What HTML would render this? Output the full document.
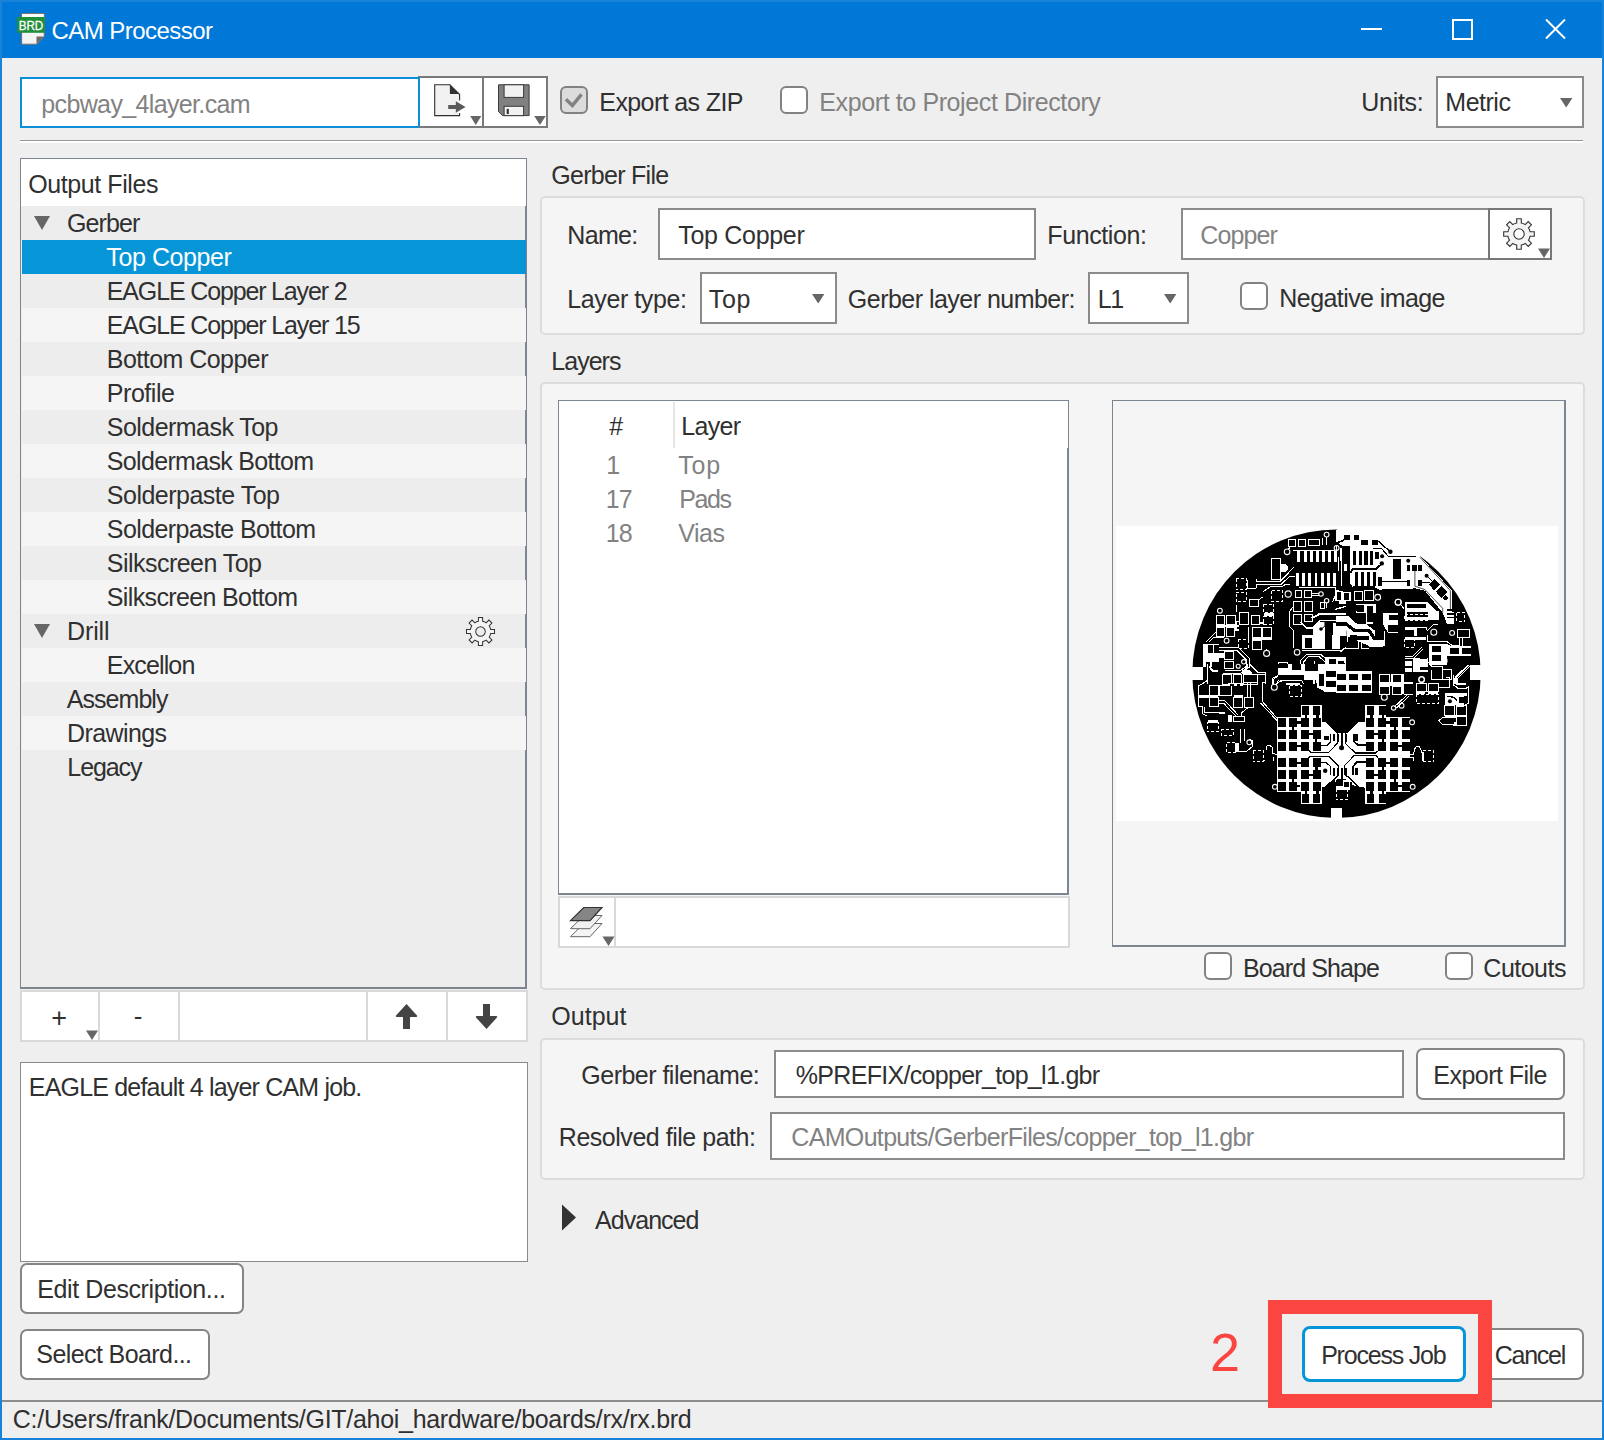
<!DOCTYPE html>
<html lang="en"><head><meta charset="utf-8"><title>CAM Processor</title>
<style>
html,body{margin:0;padding:0;background:#efefef;}
body{width:1604px;height:1440px;overflow:hidden;font-family:"Liberation Sans",sans-serif;}
#win{position:relative;width:1604px;height:1440px;background:#efefef;overflow:hidden;}
#win div,#win svg{position:absolute;box-sizing:border-box;}
.t{white-space:pre;font-family:"Liberation Sans",sans-serif;}
#titlebar{left:0;top:0;width:1604px;height:58px;background:#0078d7;border-top:2px solid #1883d8;}
#bl{left:0;top:0;width:2px;height:1440px;background:#1883d8;}
#br{left:1602px;top:0;width:2px;height:1440px;background:#1883d8;}
#bb{left:0;top:1438px;width:1604px;height:2px;background:#1883d8;}
.inp{background:#fff;border:2px solid #8b8b8b;}
.btn{background:#fff;border:2px solid #858585;border-radius:7px;}
.cb{width:28px;height:28px;background:#fff;border:2px solid #828282;border-radius:6px;}
.grp{background:#f5f5f5;border:2px solid #dcdcdc;border-radius:5px;}
.sunk{border-style:solid;border-color:#7d8590;border-width:1px 2px 2px 1px;}
.tb{background:#fff;border:2px solid #d9d9d9;}
.vd{width:2px;background:#d9d9d9;}
.row{left:3px;width:503px;height:34px;}
.ra{background:#ededed;}
.rb{background:#f5f5f5;width:504px !important;}

</style></head>
<body>
<div id="win">
<div id="titlebar"></div>
<div id="bl"></div><div id="br"></div><div id="bb"></div>
<!-- title icon -->
<svg style="left:17px;top:13px" width="30" height="33" viewBox="0 0 30 33">
  <path d="M4.600 0.600h22.600v23l-7.500 7.600h-15.100z" fill="#f4f4f4" stroke="#7a6c64" stroke-width="1"/>
  <rect x="5.100" y="1.100" width="21.600" height="3" fill="#fff"/>
  <path d="M27.200 23.400h-7.700v7.700z" fill="#6b6b6b"/>
  <rect x="0" y="4" width="27.700" height="15.800" fill="#1f8f3a"/>
  <text x="14" y="16.900" font-family="Liberation Sans, sans-serif" font-size="13.600" fill="#fff" text-anchor="middle" textLength="24.600" stroke="#fff" stroke-width="0.3" lengthAdjust="spacingAndGlyphs">BRD</text>
</svg>
<!-- window controls -->
<svg style="left:1350px;top:10px" width="230" height="40" viewBox="0 0 230 40">
  <rect x="11" y="18" width="21" height="2" fill="#fff"/>
  <rect x="103" y="10" width="19" height="19" fill="none" stroke="#fff" stroke-width="2"/>
  <path d="M196 9.5l19 19M215 9.5l-19 19" stroke="#fff" stroke-width="2" fill="none"/>
</svg>

<!-- top row -->
<div style="left:20px;top:77px;width:400px;height:51px;background:#fff;border:2px solid #0a8fd8;"></div>
<div class="inp" style="left:418px;top:76px;width:66px;height:52px;border-color:#7a7a7a;border-left-color:#0a8fd8"></div>
<div class="inp" style="left:482px;top:76px;width:66px;height:52px;border-color:#7a7a7a"></div>
<!-- export doc icon -->
<svg style="left:430px;top:80px" width="56" height="50" viewBox="0 0 56 50">
  <path d="M4.700 4.800h15.200l9.700 9.700v21.100h-24.900z" fill="#f2f2f2" stroke="#2e2e2e" stroke-width="1.100"/>
  <path d="M19.900 4.800v9.300h9.700z" fill="#333"/>
  <rect x="28" y="20.500" width="3" height="12.500" fill="#fff"/>
  <path d="M18.200 25h7.600v-3.800l9.800 5.750-9.800 5.750v-3.800h-7.600z" fill="#5a5a5a"/>
  <path d="M40.200 36.100h11.100l-5.550 8.900z" fill="#666"/>
</svg>
<!-- save icon -->
<svg style="left:494px;top:80px" width="56" height="50" viewBox="0 0 56 50">
  <path d="M4.500 4.800h30.600v30.800h-26.600l-4-4z" fill="#808080" stroke="#3a3a3a" stroke-width="1"/>
  <rect x="10.100" y="4.800" width="19.500" height="12.600" fill="#f2f2f2" stroke="#3a3a3a" stroke-width="1"/>
  <rect x="10.100" y="26.300" width="19.500" height="9.300" fill="#f2f2f2" stroke="#3a3a3a" stroke-width="1"/>
  <rect x="12.700" y="28.900" width="2.100" height="5.100" fill="#2e2e2e"/>
  <path d="M40.200 36.100h11.500l-5.750 8.900z" fill="#666"/>
</svg>
<div class="cb" style="left:560px;top:86px;background:#dcdcdc;border-color:#828282"></div>
<svg style="left:560px;top:86px" width="28" height="28" viewBox="0 0 28 28"><path d="M5.900 13.300l6.500 6.200 9.100-11.200" fill="none" stroke="#828282" stroke-width="3.500"/></svg>
<div class="cb" style="left:780.300px;top:86px"></div>
<div class="inp" style="left:1436px;top:76px;width:148px;height:52px"></div>
<svg style="left:1558px;top:96px" width="18" height="14" viewBox="0 0 18 14"><path d="M2 2h12.400l-6.200 9.600z" fill="#666"/></svg>
<div style="left:20px;top:140px;width:1563px;height:1px;background:#979797"></div>
<div style="left:20px;top:141px;width:1563px;height:2px;background:#fff"></div>

<!-- tree -->
<div class="sunk" style="left:20px;top:158px;width:507px;height:830.500px;background:#ededed;">
  <div style="left:0;top:0;width:505px;height:47px;background:#fff"></div>
</div>
<div id="rows" style="left:19px;top:206px;width:506px;height:580px;">
  <div class="row ra" style="top:0"></div>
  <div class="row" style="top:34px;width:504px;background:#0696d7"></div>
  <div class="row ra" style="top:68px"></div>
  <div class="row rb" style="top:102px"></div>
  <div class="row ra" style="top:136px"></div>
  <div class="row rb" style="top:170px"></div>
  <div class="row ra" style="top:204px"></div>
  <div class="row rb" style="top:238px"></div>
  <div class="row ra" style="top:272px"></div>
  <div class="row rb" style="top:306px"></div>
  <div class="row ra" style="top:340px"></div>
  <div class="row rb" style="top:374px"></div>
  <div class="row ra" style="top:408px"></div>
  <div class="row rb" style="top:442px"></div>
  <div class="row ra" style="top:476px"></div>
  <div class="row rb" style="top:510px"></div>
  <div class="row ra" style="top:544px"></div>
</div>
<svg style="left:32px;top:214px" width="20" height="18" viewBox="0 0 20 18"><path d="M2 2h16l-8 14z" fill="#666"/></svg>
<svg style="left:32px;top:622px" width="20" height="18" viewBox="0 0 20 18"><path d="M2 2h16l-8 14z" fill="#666"/></svg>
<svg class="gear" style="left:463.560px;top:614.500px" width="33" height="33" viewBox="-18 -18 36 36"><path fill="#f4f4f4" fill-rule="evenodd" stroke="#333" stroke-width="1.1" stroke-linejoin="miter" d="M-2.30 -11.06L-2.30 -15.30L2.30 -15.30L2.30 -11.06A11.3 11.3 0 0 1 6.20 -9.45L9.19 -12.45L12.45 -9.19L9.45 -6.20A11.3 11.3 0 0 1 11.06 -2.30L15.30 -2.30L15.30 2.30L11.06 2.30A11.3 11.3 0 0 1 9.45 6.20L12.45 9.19L9.19 12.45L6.20 9.45A11.3 11.3 0 0 1 2.30 11.06L2.30 15.30L-2.30 15.30L-2.30 11.06A11.3 11.3 0 0 1 -6.20 9.45L-9.19 12.45L-12.45 9.19L-9.45 6.20A11.3 11.3 0 0 1 -11.06 2.30L-15.30 2.30L-15.30 -2.30L-11.06 -2.30A11.3 11.3 0 0 1 -9.45 -6.20L-12.45 -9.19L-9.19 -12.45L-6.20 -9.45A11.3 11.3 0 0 1 -2.30 -11.06ZM5.20 0A5.20 5.20 0 1 0 -5.20 0A5.20 5.20 0 1 0 5.20 0Z"/></svg>

<!-- tree toolbar -->
<div class="tb" style="left:20px;top:990px;width:508px;height:51.500px"></div>
<div class="vd" style="left:98px;top:990px;height:51.500px"></div>
<div class="vd" style="left:178px;top:990px;height:51.500px"></div>
<div class="vd" style="left:366px;top:990px;height:51.500px"></div>
<div class="vd" style="left:446px;top:990px;height:51.500px"></div>
<svg style="left:84px;top:1028px" width="16" height="13" viewBox="0 0 16 13"><path d="M2 2.500h12l-6 9.500z" fill="#666"/></svg>
<svg style="left:390px;top:1000px" width="120" height="34" viewBox="0 0 120 34">
  <path d="M16.500 4l-10.500 11.500q-0.800 1.500 1 1.500h6v12h7v-12h6q1.800 0 1-1.500z" fill="#444"/>
  <path d="M96.500 29l-10.500-11.500q-0.800-1.500 1-1.500h6v-12h7v12h6q1.800 0 1 1.500z" fill="#444"/>
</svg>

<!-- description -->
<div style="left:20px;top:1062px;width:508px;height:200px;background:#fff;border:1px solid #8a8a8a"></div>
<div class="btn" style="left:20px;top:1262.500px;width:224px;height:51.500px"></div>
<div class="btn" style="left:20px;top:1328.500px;width:190px;height:51.500px"></div>

<!-- status bar line -->
<div style="left:2px;top:1400px;width:1600px;height:2px;background:#8c8c8c"></div>

<!-- Gerber File group -->
<div class="grp" style="left:540px;top:196px;width:1045px;height:139px"></div>
<div class="inp" style="left:658px;top:208px;width:378px;height:52px"></div>
<div class="inp" style="left:1181px;top:208px;width:310px;height:52px"></div>
<div class="inp" style="left:1488px;top:208px;width:64px;height:52px;border-color:#777"></div>
<svg class="gear" style="left:1501.400px;top:215.500px" width="36" height="36" viewBox="-18 -18 36 36"><path fill="#f4f4f4" fill-rule="evenodd" stroke="#333" stroke-width="1.1" stroke-linejoin="miter" d="M-2.30 -11.06L-2.30 -15.30L2.30 -15.30L2.30 -11.06A11.3 11.3 0 0 1 6.20 -9.45L9.19 -12.45L12.45 -9.19L9.45 -6.20A11.3 11.3 0 0 1 11.06 -2.30L15.30 -2.30L15.30 2.30L11.06 2.30A11.3 11.3 0 0 1 9.45 6.20L12.45 9.19L9.19 12.45L6.20 9.45A11.3 11.3 0 0 1 2.30 11.06L2.30 15.30L-2.30 15.30L-2.30 11.06A11.3 11.3 0 0 1 -6.20 9.45L-9.19 12.45L-12.45 9.19L-9.45 6.20A11.3 11.3 0 0 1 -11.06 2.30L-15.30 2.30L-15.30 -2.30L-11.06 -2.30A11.3 11.3 0 0 1 -9.45 -6.20L-12.45 -9.19L-9.19 -12.45L-6.20 -9.45A11.3 11.3 0 0 1 -2.30 -11.06ZM5.20 0A5.20 5.20 0 1 0 -5.20 0A5.20 5.20 0 1 0 5.20 0Z"/></svg>
<svg style="left:1536px;top:246px" width="16" height="13" viewBox="0 0 16 13"><path d="M2 2.500h12l-6 9.500z" fill="#666"/></svg>
<div class="inp" style="left:700px;top:272px;width:136.500px;height:52px"></div>
<svg style="left:810px;top:292px" width="18" height="14" viewBox="0 0 18 14"><path d="M2 2h12.400l-6.200 9.600z" fill="#666"/></svg>
<div class="inp" style="left:1088px;top:272px;width:101px;height:52px"></div>
<svg style="left:1162px;top:292px" width="18" height="14" viewBox="0 0 18 14"><path d="M2 2h12.400l-6.200 9.600z" fill="#666"/></svg>
<div class="cb" style="left:1240.300px;top:282.300px"></div>

<!-- Layers group -->
<div class="grp" style="left:540px;top:382px;width:1045px;height:608px"></div>
<div class="sunk" style="left:558px;top:400px;width:511px;height:495px;background:#fff"></div>
<div style="left:1067px;top:401px;width:1px;height:47px;background:#fff"></div>
<div style="left:673px;top:402px;width:2px;height:46px;background:#e6e6e6"></div>
<div class="tb" style="left:558px;top:896px;width:511.500px;height:52px"></div>
<div class="vd" style="left:614px;top:896px;height:52px"></div>
<svg style="left:566px;top:903px" width="52" height="46" viewBox="0 0 52 46">
  <path d="M4.500 33.700l13.200-13.200h18.300l-12 13.200z" fill="#f4f4f4" stroke="#666" stroke-width="1"/>
  <path d="M4.500 25.700l13.200-13.200h18.300l-12 13.200z" fill="#f0f0f0" stroke="#666" stroke-width="1"/>
  <path d="M4.500 17.700l13.200-13.200h18.300l-12 13.200z" fill="#858585" stroke="#333" stroke-width="1.200"/>
  <path d="M36.500 33.500h12l-6 9.500z" fill="#666"/>
</svg>
<div class="sunk" style="left:1112px;top:400px;width:453.500px;height:547px;background:#f5f5f5;border-width:1px 2px 2px 1px"></div>
<div style="left:1116px;top:526px;width:442px;height:295px;background:#fff"></div>
<svg style="left:1116px;top:526px" width="442" height="295" viewBox="1116 526 442 295" shape-rendering="crispEdges"><defs><clipPath id="pc"><circle cx="1336.5" cy="673.7" r="145.2"/></clipPath></defs><circle cx="1336.5" cy="673.7" r="144.2" fill="#000" shape-rendering="geometricPrecision"/><g clip-path="url(#pc)"><polyline points="1292.7,550.7 1335.4,550.7" fill="none" stroke="#fff" stroke-width="1.0" stroke-linejoin="round"/><rect x="1297.4" y="551.2" width="3.0" height="11.1" fill="#fff"/><rect x="1303.6" y="551.2" width="3.0" height="11.1" fill="#fff"/><rect x="1309.7" y="551.2" width="3.0" height="11.1" fill="#fff"/><rect x="1315.8" y="551.2" width="3.0" height="11.1" fill="#fff"/><rect x="1321.9" y="551.2" width="3.0" height="11.1" fill="#fff"/><rect x="1328.0" y="551.2" width="3.0" height="11.1" fill="#fff"/><rect x="1334.1" y="551.2" width="3.0" height="11.1" fill="#fff"/><rect x="1296.2" y="573.4" width="2.8" height="12.4" fill="#fff"/><rect x="1302.3" y="573.4" width="2.8" height="12.4" fill="#fff"/><rect x="1308.4" y="573.4" width="2.8" height="12.4" fill="#fff"/><rect x="1314.6" y="573.4" width="2.8" height="12.4" fill="#fff"/><rect x="1320.7" y="573.4" width="2.8" height="12.4" fill="#fff"/><rect x="1326.8" y="573.4" width="2.8" height="12.4" fill="#fff"/><rect x="1332.9" y="573.4" width="2.8" height="12.4" fill="#fff"/><polyline points="1299.3,587.1 1334.9,587.1" fill="none" stroke="#fff" stroke-width="1.0" stroke-linejoin="round"/><rect x="1271.6" y="558.4" width="8.9" height="21.1" fill="none" stroke="#fff" stroke-width="1.0"/><rect x="1280.7" y="564.0" width="5.0" height="7.8" fill="#fff"/><polygon points="1285.7,564.0 1288.8,567.9 1285.7,571.8" fill="#fff"/><polyline points="1256.0,579.0 1256.0,581.8 1279.9,581.8 1294.3,566.8" fill="none" stroke="#fff" stroke-width="1.0" stroke-linejoin="round"/><polyline points="1247.7,588.4 1256.0,588.4 1256.0,584.9 1280.4,584.9 1289.9,576.2 1295.4,576.2" fill="none" stroke="#fff" stroke-width="1.0" stroke-linejoin="round"/><polyline points="1262.7,591.8 1270.4,586.8 1281.6,586.8 1286.0,584.0 1290.4,584.0" fill="none" stroke="#fff" stroke-width="1.0" stroke-linejoin="round"/><rect x="1236.0" y="578.4" width="10.6" height="11.1" fill="none" stroke="#fff" stroke-width="1.0" stroke-dasharray="3 2"/><rect x="1236.0" y="592.9" width="10.6" height="8.9" fill="none" stroke="#fff" stroke-width="1.0" stroke-dasharray="3 2"/><rect x="1246.6" y="579.6" width="1.7" height="8.9" fill="#fff"/><circle cx="1287.1" cy="551.8" r="2.8" fill="none" stroke="#fff" stroke-width="1.1" shape-rendering="geometricPrecision"/><polyline points="1288.8,549.0 1289.9,546.8 1296.0,546.8" fill="none" stroke="#fff" stroke-width="1.0" stroke-linejoin="round"/><rect x="1288.2" y="539.6" width="7.2" height="6.7" fill="none" stroke="#fff" stroke-width="1.0"/><rect x="1298.2" y="539.6" width="7.2" height="6.7" fill="none" stroke="#fff" stroke-width="1.0"/><rect x="1308.2" y="539.6" width="11.1" height="5.6" fill="none" stroke="#fff" stroke-width="1.0"/><circle cx="1326.6" cy="534.6" r="2.4" fill="none" stroke="#fff" stroke-width="1.1" shape-rendering="geometricPrecision"/><polyline points="1326.6,537.0 1326.6,545.1" fill="none" stroke="#fff" stroke-width="1.0" stroke-linejoin="round"/><polyline points="1322.7,545.1 1322.7,538.4" fill="none" stroke="#fff" stroke-width="1.0" stroke-linejoin="round"/><circle cx="1336.6" cy="547.9" r="2.4" fill="none" stroke="#fff" stroke-width="1.1" shape-rendering="geometricPrecision"/><rect x="1216.0" y="615.1" width="8.3" height="9.4" fill="none" stroke="#fff" stroke-width="1.0"/><rect x="1226.6" y="615.1" width="8.9" height="9.4" fill="none" stroke="#fff" stroke-width="1.0"/><rect x="1239.3" y="612.9" width="8.9" height="11.1" fill="none" stroke="#fff" stroke-width="1.0"/><rect x="1251.0" y="615.1" width="8.3" height="8.9" fill="none" stroke="#fff" stroke-width="1.0"/><rect x="1216.0" y="624.6" width="19.4" height="2.8" fill="#fff"/><rect x="1216.0" y="627.3" width="8.3" height="8.9" fill="none" stroke="#fff" stroke-width="1.0"/><rect x="1226.6" y="627.3" width="8.3" height="8.9" fill="none" stroke="#fff" stroke-width="1.0"/><circle cx="1219.9" cy="610.7" r="2.4" fill="none" stroke="#fff" stroke-width="1.1" shape-rendering="geometricPrecision"/><circle cx="1226.6" cy="640.7" r="2.4" fill="none" stroke="#fff" stroke-width="1.1" shape-rendering="geometricPrecision"/><rect x="1235.4" y="620.7" width="3.9" height="10.0" fill="#fff"/><rect x="1236.6" y="622.3" width="2.0" height="2.4" fill="#000"/><rect x="1236.6" y="626.8" width="2.0" height="2.4" fill="#000"/><rect x="1252.1" y="627.3" width="9.4" height="10.0" fill="none" stroke="#fff" stroke-width="1.0"/><rect x="1262.7" y="627.3" width="8.9" height="10.0" fill="none" stroke="#fff" stroke-width="1.0"/><rect x="1251.6" y="637.3" width="20.0" height="2.8" fill="#fff"/><rect x="1252.1" y="640.1" width="9.4" height="8.9" fill="none" stroke="#fff" stroke-width="1.0"/><rect x="1238.2" y="639.6" width="10.0" height="8.9" fill="none" stroke="#fff" stroke-width="1.0" stroke-dasharray="3 2"/><rect x="1263.8" y="604.0" width="10.0" height="8.9" fill="none" stroke="#fff" stroke-width="1.0" stroke-dasharray="3 2"/><rect x="1263.8" y="616.2" width="10.0" height="7.8" fill="none" stroke="#fff" stroke-width="1.0" stroke-dasharray="3 2"/><rect x="1259.3" y="621.8" width="4.4" height="2.2" fill="#fff"/><rect x="1263.8" y="612.9" width="10.0" height="3.3" fill="#fff"/><circle cx="1266.6" cy="653.4" r="3.0" fill="none" stroke="#fff" stroke-width="1.1" shape-rendering="geometricPrecision"/><polyline points="1266.6,650.4 1266.6,649.0" fill="none" stroke="#fff" stroke-width="1.0" stroke-linejoin="round"/><polyline points="1236.6,605.1 1236.6,611.8" fill="none" stroke="#fff" stroke-width="1.0" stroke-linejoin="round"/><polyline points="1248.2,627.3 1248.2,639.6" fill="none" stroke="#fff" stroke-width="1.0" stroke-linejoin="round"/><rect x="1202.7" y="644.0" width="16.7" height="23.3" fill="#fff"/><rect x="1207.7" y="644.6" width="5.0" height="8.0" fill="#000"/><rect x="1214.3" y="644.6" width="4.7" height="8.0" fill="#000"/><rect x="1206.0" y="661.6" width="4.4" height="5.8" fill="#000"/><rect x="1212.1" y="661.6" width="6.9" height="5.8" fill="#000"/><rect x="1219.3" y="653.4" width="5.6" height="5.0" fill="#fff"/><polyline points="1206.0,641.8 1216.0,631.8 1216.0,627.3" fill="none" stroke="#fff" stroke-width="1.0" stroke-linejoin="round"/><polyline points="1209.3,641.8 1213.8,637.3 1224.3,637.3" fill="none" stroke="#fff" stroke-width="1.0" stroke-linejoin="round"/><polyline points="1219.3,647.3 1238.2,647.3 1249.3,658.4 1249.3,667.3 1240.4,673.4 1222.7,673.4" fill="none" stroke="#fff" stroke-width="1.0" stroke-linejoin="round"/><polyline points="1219.3,650.1 1236.6,650.1 1246.6,660.1 1246.6,666.2 1239.9,670.7 1224.9,670.7" fill="none" stroke="#fff" stroke-width="1.0" stroke-linejoin="round"/><rect x="1224.9" y="651.8" width="8.9" height="7.2" fill="none" stroke="#fff" stroke-width="1.0"/><rect x="1224.9" y="661.8" width="8.9" height="6.7" fill="none" stroke="#fff" stroke-width="1.0"/><circle cx="1243.8" cy="661.8" r="2.2" fill="none" stroke="#fff" stroke-width="1.1" shape-rendering="geometricPrecision"/><circle cx="1238.2" cy="666.2" r="2.0" fill="none" stroke="#fff" stroke-width="1.1" shape-rendering="geometricPrecision"/><polyline points="1209.3,667.3 1212.7,671.8 1218.2,671.8" fill="none" stroke="#fff" stroke-width="1.0" stroke-linejoin="round"/><rect x="1293.2" y="601.8" width="8.3" height="10.0" fill="none" stroke="#fff" stroke-width="1.0"/><rect x="1304.9" y="601.8" width="7.8" height="10.0" fill="none" stroke="#fff" stroke-width="1.0"/><rect x="1293.2" y="614.0" width="8.3" height="10.0" fill="none" stroke="#fff" stroke-width="1.0"/><rect x="1304.9" y="614.0" width="7.8" height="7.8" fill="none" stroke="#fff" stroke-width="1.0"/><polyline points="1292.7,607.3 1289.3,611.8 1289.3,626.2 1293.8,630.7 1293.8,648.4" fill="none" stroke="#fff" stroke-width="1.0" stroke-linejoin="round"/><polygon points="1301.6,635.1 1301.6,649.0 1346.0,649.0 1346.0,622.9 1332.7,622.9 1332.7,635.1" fill="#fff"/><polygon points="1312.7,635.1 1312.7,628.4 1319.3,621.8 1324.9,621.8 1324.9,635.1" fill="#fff"/><rect x="1305.4" y="638.4" width="6.1" height="10.0" fill="#000"/><rect x="1324.9" y="627.9" width="6.9" height="21.1" fill="#000"/><rect x="1339.9" y="624.0" width="6.1" height="25.0" fill="#000"/><polyline points="1311.6,618.4 1319.3,614.2 1346.0,614.2" fill="none" stroke="#fff" stroke-width="2.0" stroke-linejoin="round"/><polyline points="1300.4,621.8 1306.6,627.9 1312.7,627.9 1319.9,620.4 1346.0,620.4" fill="none" stroke="#fff" stroke-width="1.3" stroke-linejoin="round"/><circle cx="1321.0" cy="629.0" r="1.8" fill="#000" shape-rendering="geometricPrecision"/><polyline points="1321.0,629.0 1324.9,626.2 1324.9,621.8" fill="none" stroke="#000" stroke-width="0.9" stroke-linejoin="round"/><circle cx="1297.1" cy="652.3" r="2.8" fill="none" stroke="#fff" stroke-width="1.1" shape-rendering="geometricPrecision"/><polyline points="1301.6,650.4 1341.6,650.4 1346.0,647.3" fill="none" stroke="#fff" stroke-width="1.0" stroke-linejoin="round"/><rect x="1304.9" y="590.7" width="6.7" height="6.7" fill="none" stroke="#fff" stroke-width="1.0"/><polyline points="1311.6,593.4 1318.8,593.4" fill="none" stroke="#fff" stroke-width="1.0" stroke-linejoin="round"/><polyline points="1311.6,595.1 1318.8,595.1" fill="none" stroke="#fff" stroke-width="1.0" stroke-linejoin="round"/><circle cx="1321.0" cy="594.0" r="2.2" fill="none" stroke="#fff" stroke-width="1.1" shape-rendering="geometricPrecision"/><rect x="1295.4" y="590.7" width="5.6" height="6.7" fill="none" stroke="#fff" stroke-width="1.0"/><circle cx="1288.2" cy="594.0" r="3.1" fill="none" stroke="#fff" stroke-width="1.1" shape-rendering="geometricPrecision"/><rect x="1271.6" y="590.7" width="11.1" height="10.6" fill="none" stroke="#fff" stroke-width="1.0" stroke-dasharray="3 2"/><circle cx="1326.6" cy="600.7" r="2.2" fill="none" stroke="#fff" stroke-width="1.1" shape-rendering="geometricPrecision"/><polyline points="1326.6,602.9 1326.6,608.4" fill="none" stroke="#fff" stroke-width="1.0" stroke-linejoin="round"/><rect x="1320.4" y="602.3" width="4.4" height="6.1" fill="none" stroke="#fff" stroke-width="1.0"/><rect x="1249.3" y="599.6" width="8.9" height="6.7" fill="none" stroke="#fff" stroke-width="1.0"/><polyline points="1258.2,600.7 1262.7,596.8" fill="none" stroke="#fff" stroke-width="1.0" stroke-linejoin="round"/><polyline points="1335.4,587.3 1335.4,595.1 1332.7,601.8" fill="none" stroke="#fff" stroke-width="1.0" stroke-linejoin="round"/><polyline points="1341.6,550.7 1341.6,586.2" fill="none" stroke="#fff" stroke-width="1.0" stroke-linejoin="round"/><polyline points="1338.2,557.3 1338.2,570.7" fill="none" stroke="#fff" stroke-width="1.0" stroke-linejoin="round"/><rect x="1334.9" y="589.6" width="4.4" height="11.1" fill="#fff"/><rect x="1339.3" y="600.7" width="6.7" height="3.3" fill="#fff"/><polyline points="1334.9,609.6 1346.0,606.2" fill="none" stroke="#fff" stroke-width="1.3" stroke-linejoin="round"/><rect x="1278.2" y="662.3" width="9.4" height="8.3" fill="none" stroke="#fff" stroke-width="1.0"/><rect x="1278.2" y="671.8" width="21.1" height="3.1" fill="#fff"/><rect x="1287.7" y="664.0" width="2.8" height="7.8" fill="#fff"/><polyline points="1303.8,668.4 1303.8,661.8 1308.2,656.8 1319.3,656.8 1324.9,661.8 1329.3,661.8" fill="none" stroke="#fff" stroke-width="1.0" stroke-linejoin="round"/><polyline points="1300.4,668.4 1300.4,660.7 1307.1,654.0 1320.4,654.0 1326.0,659.0" fill="none" stroke="#fff" stroke-width="1.0" stroke-linejoin="round"/><polygon points="1324.9,657.3 1346.0,657.3 1346.0,684.0 1312.7,684.0 1312.7,677.3 1324.9,677.3" fill="#fff"/><rect x="1329.3" y="659.0" width="6.9" height="6.9" fill="#000"/><rect x="1338.2" y="659.0" width="6.9" height="6.9" fill="#000"/><rect x="1329.3" y="668.4" width="6.9" height="6.9" fill="#000"/><rect x="1338.2" y="668.4" width="6.9" height="6.9" fill="#000"/><rect x="1314.9" y="679.0" width="6.9" height="6.9" fill="#000"/><rect x="1324.9" y="679.0" width="6.9" height="6.9" fill="#000"/><rect x="1334.9" y="679.0" width="6.9" height="6.9" fill="#000"/><rect x="1313.8" y="660.7" width="5.6" height="8.9" fill="#000"/><rect x="1313.8" y="660.7" width="1.3" height="8.9" fill="#fff"/><polyline points="1273.8,684.0 1273.8,679.0 1278.2,676.2" fill="none" stroke="#fff" stroke-width="1.0" stroke-linejoin="round"/><polyline points="1277.1,684.0 1280.4,680.7 1301.6,680.7 1303.8,684.0" fill="none" stroke="#fff" stroke-width="1.0" stroke-linejoin="round"/><rect x="1222.7" y="674.0" width="8.9" height="10.0" fill="none" stroke="#fff" stroke-width="1.0"/><rect x="1233.8" y="674.0" width="7.8" height="10.0" fill="none" stroke="#fff" stroke-width="1.0"/><rect x="1243.8" y="674.0" width="13.3" height="10.0" fill="none" stroke="#fff" stroke-width="1.0"/><polyline points="1249.3,664.0 1258.2,672.9 1265.4,672.9 1265.4,684.0" fill="none" stroke="#fff" stroke-width="1.0" stroke-linejoin="round"/><polyline points="1207.1,668.4 1207.1,684.0" fill="none" stroke="#fff" stroke-width="1.0" stroke-linejoin="round"/><polygon points="1342.7,524.0 1420.4,524.0 1420.4,556.8 1452.1,590.7 1452.1,611.8 1454.3,611.8 1454.3,624.0 1447.1,624.0 1442.7,612.9 1424.9,590.7 1416.0,588.4 1379.3,589.6 1373.8,586.8 1352.7,586.8 1350.4,584.0 1350.4,546.2 1342.7,546.2 1336.0,541.8 1336.0,530.7" fill="#fff"/><rect x="1344.3" y="535.1" width="5.6" height="4.4" fill="#000"/><rect x="1354.3" y="535.1" width="4.7" height="4.4" fill="#000"/><rect x="1361.0" y="539.6" width="7.2" height="5.0" fill="#000"/><rect x="1371.6" y="539.6" width="6.1" height="5.0" fill="#000"/><polyline points="1377.7,540.7 1390.4,551.8" fill="none" stroke="#000" stroke-width="1.3" stroke-linejoin="round"/><circle cx="1390.4" cy="551.8" r="2.2" fill="#000" shape-rendering="geometricPrecision"/><polyline points="1336.0,542.9 1342.7,540.7 1346.0,538.4" fill="none" stroke="#000" stroke-width="1.6" stroke-linejoin="round"/><rect x="1347.1" y="546.8" width="3.3" height="13.9" fill="#000"/><rect x="1352.7" y="550.7" width="3.3" height="13.9" fill="#000"/><rect x="1358.8" y="550.7" width="3.3" height="13.9" fill="#000"/><rect x="1364.3" y="550.7" width="3.3" height="13.9" fill="#000"/><rect x="1369.9" y="550.7" width="3.3" height="13.9" fill="#000"/><polyline points="1350.4,572.9 1352.7,569.0 1376.0,569.0 1382.1,563.4" fill="none" stroke="#000" stroke-width="1.8" stroke-linejoin="round"/><circle cx="1381.8" cy="563.4" r="2.2" fill="#000" shape-rendering="geometricPrecision"/><rect x="1375.4" y="551.8" width="3.9" height="6.7" fill="#000"/><circle cx="1382.1" cy="556.2" r="2.0" fill="#000" shape-rendering="geometricPrecision"/><polyline points="1372.7,548.4 1381.6,548.4 1388.2,556.2 1416.0,556.2" fill="none" stroke="#000" stroke-width="1.1" stroke-linejoin="round"/><rect x="1354.9" y="572.3" width="3.1" height="13.3" fill="#000"/><rect x="1361.0" y="572.3" width="3.1" height="13.3" fill="#000"/><rect x="1367.1" y="572.3" width="3.1" height="13.3" fill="#000"/><rect x="1373.2" y="572.3" width="3.1" height="13.3" fill="#000"/><rect x="1352.7" y="586.2" width="22.2" height="1.7" fill="#000"/><rect x="1393.2" y="559.0" width="7.8" height="20.0" fill="#000"/><rect x="1378.2" y="577.3" width="3.3" height="8.3" fill="#000"/><rect x="1407.1" y="579.6" width="3.3" height="6.7" fill="#000"/><polyline points="1381.6,581.8 1407.1,581.8" fill="none" stroke="#000" stroke-width="1.3" stroke-linejoin="round"/><rect x="1407.1" y="565.1" width="3.3" height="5.6" fill="#000"/><rect x="1412.1" y="565.1" width="4.4" height="5.6" fill="#000"/><rect x="1418.2" y="565.1" width="3.3" height="5.6" fill="#000"/><circle cx="1408.2" cy="560.7" r="2.0" fill="#000" shape-rendering="geometricPrecision"/><polyline points="1414.9,570.7 1414.9,586.2 1424.9,589.6 1442.7,608.4 1442.7,612.9" fill="none" stroke="#000" stroke-width="0.7" stroke-linejoin="round"/><polyline points="1419.9,557.3 1450.4,590.7 1450.4,609.6" fill="none" stroke="#000" stroke-width="0.7" stroke-linejoin="round"/><rect x="1418.2" y="580.1" width="3.9" height="5.6" fill="#000"/><circle cx="1426.6" cy="575.7" r="2.0" fill="#000" shape-rendering="geometricPrecision"/><polyline points="1422.1,582.3 1430.4,582.3" fill="none" stroke="#000" stroke-width="1.1" stroke-linejoin="round"/><polyline points="1426.6,575.7 1432.7,581.8" fill="none" stroke="#000" stroke-width="1.1" stroke-linejoin="round"/><polygon points="1429.3,584.6 1434.9,579.0 1440.4,584.6 1434.3,590.7" fill="#000"/><polygon points="1436.0,591.8 1441.6,586.2 1447.1,591.8 1441.6,598.4" fill="#000"/><polygon points="1442.7,597.3 1446.0,595.1 1448.2,598.4 1444.9,600.7" fill="#000"/><rect x="1447.1" y="609.0" width="6.9" height="2.4" fill="#000"/><rect x="1447.1" y="613.4" width="6.9" height="1.3" fill="#000"/><rect x="1447.1" y="616.8" width="6.9" height="1.3" fill="#000"/><rect x="1456.6" y="612.9" width="8.3" height="8.3" fill="none" stroke="#fff" stroke-width="1.0" stroke-dasharray="3 2"/><rect x="1336.0" y="546.2" width="1.3" height="14.4" fill="#fff"/><rect x="1340.4" y="547.9" width="1.6" height="13.3" fill="#fff"/><rect x="1344.3" y="564.0" width="2.2" height="6.7" fill="#fff"/><rect x="1336.0" y="590.7" width="6.7" height="10.0" fill="#fff"/><rect x="1336.9" y="591.8" width="4.4" height="7.8" fill="#000"/><rect x="1342.7" y="591.8" width="7.8" height="8.9" fill="#fff"/><rect x="1343.8" y="592.9" width="5.6" height="6.7" fill="#000"/><rect x="1354.3" y="591.8" width="8.3" height="8.9" fill="none" stroke="#fff" stroke-width="1.0"/><rect x="1364.9" y="590.7" width="8.3" height="10.0" fill="none" stroke="#fff" stroke-width="1.0"/><circle cx="1377.7" cy="597.3" r="2.9" fill="none" stroke="#fff" stroke-width="1.1" shape-rendering="geometricPrecision"/><circle cx="1398.2" cy="602.3" r="3.0" fill="none" stroke="#fff" stroke-width="1.1" shape-rendering="geometricPrecision"/><polyline points="1400.4,604.0 1403.8,608.4" fill="none" stroke="#fff" stroke-width="1.0" stroke-linejoin="round"/><polygon points="1336.0,616.2 1348.2,616.2 1357.1,624.0 1366.0,624.0 1374.9,630.7 1374.9,639.6 1384.9,639.6 1384.9,646.2 1369.3,646.2 1347.1,636.2 1336.0,636.2" fill="#fff"/><polygon points="1356.0,604.0 1376.0,604.0 1376.0,612.9 1372.7,612.9 1372.7,624.0 1366.0,624.0 1366.0,612.9 1356.0,612.9" fill="#fff"/><polygon points="1382.7,612.9 1398.2,612.9 1398.2,632.9 1388.2,632.9 1382.7,624.0" fill="#fff"/><rect x="1389.3" y="614.6" width="8.9" height="5.6" fill="#000"/><rect x="1388.2" y="624.6" width="10.0" height="7.8" fill="#000"/><rect x="1357.1" y="605.1" width="6.7" height="6.7" fill="#000"/><rect x="1366.6" y="605.7" width="6.7" height="16.7" fill="#000"/><rect x="1377.7" y="609.6" width="3.3" height="14.4" fill="#000"/><polyline points="1356.0,609.6 1362.7,606.2" fill="none" stroke="#000" stroke-width="2.2" stroke-linejoin="round"/><polyline points="1356.0,606.2 1362.7,610.7" fill="none" stroke="#000" stroke-width="2.2" stroke-linejoin="round"/><polyline points="1336.0,624.0 1346.0,624.0 1354.9,630.7 1369.3,630.7 1374.9,639.6" fill="none" stroke="#000" stroke-width="3.3" stroke-linejoin="round"/><polyline points="1347.1,639.6 1347.1,630.7" fill="none" stroke="#000" stroke-width="0.9" stroke-linejoin="round"/><rect x="1350.4" y="635.1" width="18.9" height="4.4" fill="#000"/><polyline points="1347.1,641.8 1347.1,630.7 1357.1,635.1 1369.3,635.1 1369.3,641.8" fill="none" stroke="#fff" stroke-width="1.0" stroke-linejoin="round"/><polyline points="1340.4,651.8 1344.9,648.4 1358.2,648.4 1358.2,639.6" fill="none" stroke="#fff" stroke-width="1.0" stroke-linejoin="round"/><polyline points="1361.6,639.6 1361.6,648.4 1369.3,648.4" fill="none" stroke="#fff" stroke-width="1.0" stroke-linejoin="round"/><polyline points="1369.3,646.2 1382.7,646.2 1384.9,644.0 1384.9,630.7" fill="none" stroke="#fff" stroke-width="1.0" stroke-linejoin="round"/><polygon points="1404.9,601.8 1427.1,601.8 1436.0,610.7 1439.3,610.7 1439.3,619.6 1404.9,619.6" fill="#fff"/><rect x="1407.1" y="604.0" width="18.9" height="4.4" fill="#000"/><rect x="1407.1" y="611.8" width="21.1" height="5.0" fill="#000"/><polyline points="1407.1,619.6 1427.1,619.6" fill="none" stroke="#fff" stroke-width="1.1" stroke-linejoin="round"/><rect x="1404.9" y="614.0" width="23.3" height="6.7" fill="none" stroke="#fff" stroke-width="1.0" stroke-dasharray="3 2"/><polyline points="1404.9,595.1 1409.3,599.6 1413.8,601.8" fill="none" stroke="#000" stroke-width="2.2" stroke-linejoin="round"/><circle cx="1405.4" cy="595.1" r="1.6" fill="#000" shape-rendering="geometricPrecision"/><circle cx="1398.2" cy="602.3" r="3.0" fill="none" stroke="#fff" stroke-width="1.1" shape-rendering="geometricPrecision"/><rect x="1404.9" y="627.3" width="22.2" height="2.8" fill="#fff"/><rect x="1417.1" y="628.4" width="8.9" height="7.8" fill="#000"/><rect x="1404.9" y="637.3" width="21.1" height="2.2" fill="#fff"/><rect x="1404.3" y="639.0" width="10.6" height="8.3" fill="none" stroke="#fff" stroke-width="1.0" stroke-dasharray="3 2"/><rect x="1413.8" y="628.4" width="3.3" height="7.8" fill="#fff"/><circle cx="1433.8" cy="632.3" r="3.0" fill="none" stroke="#fff" stroke-width="1.1" shape-rendering="geometricPrecision"/><polyline points="1427.1,630.7 1433.8,624.0 1438.2,624.0" fill="none" stroke="#fff" stroke-width="1.0" stroke-linejoin="round"/><circle cx="1452.1" cy="632.9" r="2.4" fill="none" stroke="#fff" stroke-width="1.1" shape-rendering="geometricPrecision"/><rect x="1457.1" y="629.6" width="12.2" height="7.8" fill="none" stroke="#fff" stroke-width="1.0"/><polyline points="1459.3,637.3 1459.3,645.1 1451.6,645.1 1447.1,641.8 1427.1,641.8 1427.1,635.1" fill="none" stroke="#fff" stroke-width="1.0" stroke-linejoin="round"/><polyline points="1462.7,637.3 1462.7,646.2 1470.4,646.2" fill="none" stroke="#fff" stroke-width="1.0" stroke-linejoin="round"/><polygon points="1429.3,644.0 1447.1,644.0 1451.6,646.2 1471.0,646.2 1471.0,656.2 1447.1,656.2 1447.1,665.1 1429.3,665.1" fill="#fff"/><rect x="1431.6" y="645.7" width="8.9" height="6.1" fill="#000"/><rect x="1431.6" y="654.6" width="8.9" height="6.1" fill="#000"/><rect x="1450.4" y="647.9" width="8.9" height="6.1" fill="#000"/><rect x="1461.6" y="647.9" width="8.9" height="6.1" fill="#000"/><rect x="1450.4" y="657.3" width="8.9" height="6.1" fill="#000"/><rect x="1462.7" y="657.3" width="7.8" height="6.1" fill="#000"/><circle cx="1444.3" cy="660.7" r="2.8" fill="none" stroke="#fff" stroke-width="1.1" shape-rendering="geometricPrecision"/><polyline points="1404.9,656.2 1412.7,656.2 1421.6,647.3" fill="none" stroke="#fff" stroke-width="1.0" stroke-linejoin="round"/><polyline points="1404.9,658.4 1413.8,658.4 1422.7,649.6" fill="none" stroke="#fff" stroke-width="1.0" stroke-linejoin="round"/><rect x="1404.9" y="660.7" width="6.7" height="5.6" fill="#fff"/><rect x="1404.9" y="668.4" width="6.7" height="3.3" fill="#fff"/><polygon points="1412.7,658.4 1428.2,658.4 1428.2,671.8 1412.7,671.8" fill="#fff"/><rect x="1420.4" y="667.3" width="7.8" height="2.8" fill="#000"/><rect x="1420.4" y="656.2" width="6.7" height="2.8" fill="#000"/><polyline points="1428.2,661.8 1431.6,666.2 1442.7,666.2 1442.7,679.6" fill="none" stroke="#fff" stroke-width="1.0" stroke-linejoin="round"/><polyline points="1431.6,669.6 1431.6,679.6 1440.4,679.6" fill="none" stroke="#fff" stroke-width="1.0" stroke-linejoin="round"/><polyline points="1468.2,665.1 1454.9,678.4 1454.9,684.0" fill="none" stroke="#fff" stroke-width="1.0" stroke-linejoin="round"/><polyline points="1471.0,665.1 1457.7,678.4 1457.7,684.0" fill="none" stroke="#fff" stroke-width="1.0" stroke-linejoin="round"/><rect x="1442.7" y="669.6" width="8.9" height="10.0" fill="none" stroke="#fff" stroke-width="1.0"/><rect x="1336.0" y="658.4" width="8.9" height="2.2" fill="#fff"/><rect x="1336.0" y="659.0" width="8.9" height="12.8" fill="none" stroke="#fff" stroke-width="1.0" stroke-dasharray="3 2"/><rect x="1343.8" y="671.8" width="27.8" height="7.8" fill="none" stroke="#fff" stroke-width="1.0" stroke-dasharray="3 2"/><rect x="1336.0" y="671.8" width="35.6" height="2.8" fill="#fff"/><rect x="1338.2" y="672.3" width="5.6" height="2.2" fill="#000"/><rect x="1349.3" y="672.3" width="6.7" height="2.2" fill="#000"/><rect x="1361.6" y="672.3" width="6.7" height="2.2" fill="#000"/><rect x="1379.3" y="674.0" width="10.0" height="10.0" fill="none" stroke="#fff" stroke-width="1.0"/><rect x="1391.6" y="674.0" width="11.1" height="10.0" fill="none" stroke="#fff" stroke-width="1.0"/><rect x="1401.6" y="674.0" width="2.2" height="10.0" fill="#fff"/><rect x="1379.3" y="681.8" width="33.3" height="2.2" fill="#fff"/><circle cx="1421.6" cy="679.6" r="2.8" fill="none" stroke="#fff" stroke-width="1.1" shape-rendering="geometricPrecision"/><polyline points="1207.1,664.0 1207.1,680.7 1198.2,686.2 1198.2,706.2 1202.7,706.2 1202.7,714.0 1207.1,716.2" fill="none" stroke="#fff" stroke-width="1.0" stroke-linejoin="round"/><rect x="1222.7" y="674.0" width="8.9" height="10.0" fill="none" stroke="#fff" stroke-width="1.0"/><rect x="1233.8" y="674.0" width="7.8" height="10.0" fill="none" stroke="#fff" stroke-width="1.0"/><rect x="1243.8" y="674.0" width="13.3" height="8.9" fill="none" stroke="#fff" stroke-width="1.0"/><polyline points="1257.1,674.0 1265.4,674.0 1265.4,682.9 1262.7,682.9 1262.7,701.8 1277.1,718.4" fill="none" stroke="#fff" stroke-width="1.0" stroke-linejoin="round"/><polyline points="1260.4,702.9 1277.1,720.7 1277.1,791.8" fill="none" stroke="#fff" stroke-width="1.0" stroke-linejoin="round"/><polygon points="1241.6,669.6 1249.3,669.6 1252.7,674.0 1241.6,674.0" fill="#fff"/><polyline points="1209.9,666.2 1212.7,670.7 1218.2,670.7" fill="none" stroke="#fff" stroke-width="1.0" stroke-linejoin="round"/><polyline points="1241.6,672.9 1247.1,667.3 1247.1,664.0" fill="none" stroke="#fff" stroke-width="1.0" stroke-linejoin="round"/><rect x="1209.9" y="685.1" width="8.3" height="10.0" fill="none" stroke="#fff" stroke-width="1.0"/><rect x="1219.3" y="685.1" width="12.2" height="10.0" fill="none" stroke="#fff" stroke-width="1.0"/><rect x="1228.2" y="683.4" width="14.4" height="2.8" fill="#fff"/><rect x="1230.4" y="683.8" width="3.3" height="2.2" fill="#000"/><rect x="1236.6" y="683.8" width="3.3" height="2.2" fill="#000"/><rect x="1198.8" y="695.1" width="18.9" height="2.8" fill="#fff"/><rect x="1209.9" y="697.9" width="8.3" height="8.9" fill="none" stroke="#fff" stroke-width="1.0"/><rect x="1233.8" y="695.1" width="8.9" height="2.8" fill="#fff"/><rect x="1233.8" y="697.3" width="8.9" height="10.0" fill="none" stroke="#fff" stroke-width="1.0"/><rect x="1244.9" y="697.3" width="8.9" height="10.0" fill="none" stroke="#fff" stroke-width="1.0"/><polyline points="1247.1,682.9 1247.1,697.3" fill="none" stroke="#fff" stroke-width="1.0" stroke-linejoin="round"/><polyline points="1250.4,682.9 1250.4,697.3" fill="none" stroke="#fff" stroke-width="1.0" stroke-linejoin="round"/><polyline points="1218.2,700.7 1224.9,700.7 1238.2,715.1" fill="none" stroke="#fff" stroke-width="1.0" stroke-linejoin="round"/><polyline points="1218.2,703.4 1223.8,703.4 1236.0,716.2" fill="none" stroke="#fff" stroke-width="1.0" stroke-linejoin="round"/><polyline points="1248.2,707.3 1241.6,712.9 1241.6,716.2" fill="none" stroke="#fff" stroke-width="1.0" stroke-linejoin="round"/><rect x="1233.8" y="716.2" width="10.6" height="5.6" fill="none" stroke="#fff" stroke-width="1.0"/><rect x="1228.2" y="715.1" width="3.3" height="6.7" fill="#fff"/><rect x="1219.3" y="711.8" width="5.6" height="2.2" fill="#fff"/><polyline points="1204.9,707.3 1204.9,712.9 1219.3,712.9" fill="none" stroke="#fff" stroke-width="1.0" stroke-linejoin="round"/><rect x="1207.7" y="719.6" width="10.6" height="3.3" fill="#fff"/><rect x="1207.1" y="722.9" width="11.7" height="8.9" fill="none" stroke="#fff" stroke-width="1.0" stroke-dasharray="3 2"/><rect x="1221.0" y="729.6" width="12.8" height="5.6" fill="none" stroke="#fff" stroke-width="1.0" stroke-dasharray="3 2"/><polyline points="1240.4,729.0 1240.4,742.9" fill="none" stroke="#fff" stroke-width="1.0" stroke-linejoin="round"/><polyline points="1244.3,729.0 1244.3,740.7" fill="none" stroke="#fff" stroke-width="1.0" stroke-linejoin="round"/><rect x="1226.6" y="742.3" width="9.4" height="10.6" fill="none" stroke="#fff" stroke-width="1.0" stroke-dasharray="3 2"/><rect x="1234.9" y="743.4" width="4.4" height="8.3" fill="#fff"/><polyline points="1239.3,751.8 1246.0,751.8 1252.7,746.2 1252.7,740.7 1249.3,739.6" fill="none" stroke="#fff" stroke-width="1.0" stroke-linejoin="round"/><circle cx="1249.3" cy="742.3" r="2.4" fill="none" stroke="#fff" stroke-width="1.1" shape-rendering="geometricPrecision"/><rect x="1253.2" y="750.7" width="10.6" height="11.1" fill="none" stroke="#fff" stroke-width="1.0" stroke-dasharray="3 2"/><polyline points="1263.8,760.7 1265.4,760.7" fill="none" stroke="#fff" stroke-width="1.0" stroke-linejoin="round"/><polyline points="1266.0,749.6 1266.0,746.8 1268.8,745.1 1272.1,746.8 1272.1,752.9 1277.1,754.6" fill="none" stroke="#fff" stroke-width="1.0" stroke-linejoin="round"/><polyline points="1273.8,757.3 1273.8,761.2" fill="none" stroke="#fff" stroke-width="1.0" stroke-linejoin="round"/><circle cx="1274.3" cy="687.3" r="3.0" fill="none" stroke="#fff" stroke-width="1.1" shape-rendering="geometricPrecision"/><polyline points="1272.7,684.0 1272.7,678.4 1278.2,675.1" fill="none" stroke="#fff" stroke-width="1.0" stroke-linejoin="round"/><polyline points="1276.6,684.6 1278.2,680.7 1281.6,681.8" fill="none" stroke="#fff" stroke-width="1.0" stroke-linejoin="round"/><rect x="1289.9" y="685.1" width="11.1" height="11.1" fill="none" stroke="#fff" stroke-width="1.0" stroke-dasharray="3 2"/><rect x="1286.0" y="682.9" width="14.4" height="2.2" fill="#fff"/><polygon points="1278.2,664.0 1346.0,664.0 1346.0,691.8 1324.9,691.8 1317.1,687.3 1316.0,679.6 1303.8,679.6 1303.8,674.6 1278.2,674.6" fill="#fff"/><rect x="1278.2" y="664.0" width="10.0" height="4.4" fill="#000"/><rect x="1291.6" y="664.0" width="8.9" height="5.6" fill="#000"/><rect x="1304.9" y="664.0" width="13.3" height="6.7" fill="#000"/><rect x="1326.0" y="670.7" width="10.0" height="6.7" fill="#000"/><rect x="1338.2" y="670.7" width="7.8" height="6.7" fill="#000"/><rect x="1326.0" y="680.7" width="10.0" height="6.7" fill="#000"/><rect x="1338.2" y="680.7" width="7.8" height="6.7" fill="#000"/><rect x="1319.3" y="674.0" width="4.4" height="12.2" fill="#000"/><rect x="1290.4" y="674.6" width="10.0" height="3.3" fill="#000"/><circle cx="1274.9" cy="786.8" r="2.4" fill="none" stroke="#fff" stroke-width="1.1" shape-rendering="geometricPrecision"/><polygon points="1336.0,670.7 1371.6,670.7 1371.6,692.9 1336.0,692.9" fill="#fff"/><rect x="1337.1" y="674.0" width="8.9" height="5.6" fill="#000"/><rect x="1337.1" y="685.1" width="8.9" height="6.1" fill="#000"/><rect x="1349.3" y="674.0" width="8.9" height="5.6" fill="#000"/><rect x="1349.3" y="685.1" width="8.9" height="6.1" fill="#000"/><rect x="1361.6" y="674.0" width="8.9" height="5.6" fill="#000"/><rect x="1361.6" y="685.1" width="8.9" height="6.1" fill="#000"/><rect x="1379.3" y="674.6" width="10.0" height="8.3" fill="none" stroke="#fff" stroke-width="1.0" stroke-dasharray="3 2"/><rect x="1392.1" y="674.6" width="8.9" height="8.3" fill="none" stroke="#fff" stroke-width="1.0"/><rect x="1379.3" y="683.4" width="24.4" height="2.4" fill="#fff"/><rect x="1379.9" y="686.2" width="9.4" height="7.8" fill="none" stroke="#fff" stroke-width="1.0"/><rect x="1392.1" y="686.2" width="8.9" height="7.8" fill="none" stroke="#fff" stroke-width="1.0"/><rect x="1401.0" y="675.1" width="2.8" height="18.9" fill="#fff"/><circle cx="1384.3" cy="697.3" r="3.0" fill="none" stroke="#fff" stroke-width="1.1" shape-rendering="geometricPrecision"/><polyline points="1403.8,683.4 1412.7,683.4" fill="none" stroke="#fff" stroke-width="1.0" stroke-linejoin="round"/><polyline points="1403.8,694.0 1412.7,694.0" fill="none" stroke="#fff" stroke-width="1.0" stroke-linejoin="round"/><polyline points="1393.8,707.3 1408.2,694.0" fill="none" stroke="#fff" stroke-width="1.0" stroke-linejoin="round"/><polyline points="1396.6,707.9 1409.3,695.7" fill="none" stroke="#fff" stroke-width="1.0" stroke-linejoin="round"/><circle cx="1393.6" cy="707.9" r="2.2" fill="none" stroke="#fff" stroke-width="1.1" shape-rendering="geometricPrecision"/><circle cx="1401.6" cy="705.7" r="2.4" fill="none" stroke="#fff" stroke-width="1.1" shape-rendering="geometricPrecision"/><circle cx="1421.6" cy="679.6" r="2.8" fill="none" stroke="#fff" stroke-width="1.1" shape-rendering="geometricPrecision"/><rect x="1416.6" y="683.4" width="10.0" height="7.8" fill="none" stroke="#fff" stroke-width="1.0"/><rect x="1428.2" y="683.4" width="10.0" height="7.8" fill="none" stroke="#fff" stroke-width="1.0"/><rect x="1416.0" y="691.2" width="22.2" height="2.8" fill="#fff"/><rect x="1416.0" y="694.0" width="22.2" height="9.4" fill="none" stroke="#fff" stroke-width="1.0" stroke-dasharray="3 2"/><rect x="1424.9" y="691.6" width="3.3" height="2.2" fill="#000"/><polyline points="1438.2,687.3 1449.3,687.3 1449.3,677.3 1446.0,677.3" fill="none" stroke="#fff" stroke-width="1.0" stroke-linejoin="round"/><polyline points="1442.7,670.7 1442.7,679.6 1432.7,679.6" fill="none" stroke="#fff" stroke-width="1.0" stroke-linejoin="round"/><rect x="1444.9" y="692.9" width="22.2" height="2.8" fill="#fff"/><polyline points="1453.8,675.1 1453.8,685.1 1458.2,688.4 1466.0,688.4 1468.8,686.2 1468.8,702.9 1463.8,706.2 1456.0,706.2" fill="none" stroke="#fff" stroke-width="1.1" stroke-linejoin="round"/><polyline points="1468.2,665.1 1456.0,676.2 1456.0,684.0 1466.0,684.0" fill="none" stroke="#fff" stroke-width="1.1" stroke-linejoin="round"/><polygon points="1444.9,695.1 1463.8,695.1 1463.8,705.1 1444.9,705.1" fill="#fff"/><circle cx="1449.9" cy="701.2" r="2.0" fill="#000" shape-rendering="geometricPrecision"/><rect x="1459.3" y="697.3" width="4.4" height="5.6" fill="#000"/><polyline points="1447.1,696.2 1453.8,697.3 1457.1,700.7" fill="none" stroke="#000" stroke-width="1.3" stroke-linejoin="round"/><rect x="1444.9" y="705.7" width="10.0" height="9.4" fill="none" stroke="#fff" stroke-width="1.0"/><rect x="1456.6" y="705.7" width="9.4" height="9.4" fill="none" stroke="#fff" stroke-width="1.0"/><rect x="1444.9" y="714.6" width="21.1" height="2.2" fill="#fff"/><rect x="1456.0" y="716.8" width="10.0" height="8.9" fill="none" stroke="#fff" stroke-width="1.0"/><polyline points="1456.0,717.3 1442.7,717.3 1438.8,720.7 1442.7,724.6 1456.0,725.1" fill="none" stroke="#fff" stroke-width="1.0" stroke-linejoin="round"/><rect x="1453.8" y="722.3" width="3.3" height="2.8" fill="#fff"/><polygon points="1277.0,716.9 1300.6,716.9 1300.6,704.8 1321.8,704.8 1321.8,721.1 1325.2,721.1 1336.8,732.8 1347.7,732.8 1357.7,721.5 1364.8,721.5 1364.8,704.8 1386.0,704.8 1386.0,716.9 1409.9,716.9 1409.9,791.5 1386.0,791.5 1386.0,803.6 1364.8,803.6 1364.8,788.2 1358.5,787.3 1352.7,784.8 1347.7,787.3 1336.0,787.3 1335.2,777.8 1325.2,787.3 1321.8,787.3 1321.8,803.6 1300.6,803.6 1300.6,791.5 1277.0,791.5" fill="#fff"/><rect x="1277.7" y="718.2" width="8.0" height="8.3" fill="#000"/><rect x="1289.1" y="718.2" width="8.0" height="8.3" fill="#000"/><rect x="1300.8" y="718.2" width="8.0" height="8.3" fill="#000"/><rect x="1312.7" y="718.2" width="8.0" height="8.3" fill="#000"/><rect x="1366.4" y="718.2" width="8.0" height="8.3" fill="#000"/><rect x="1378.1" y="718.2" width="8.0" height="8.3" fill="#000"/><rect x="1390.2" y="718.2" width="8.0" height="8.3" fill="#000"/><rect x="1401.8" y="718.2" width="8.0" height="8.3" fill="#000"/><rect x="1277.7" y="730.2" width="8.0" height="8.3" fill="#000"/><rect x="1289.1" y="730.2" width="8.0" height="8.3" fill="#000"/><rect x="1300.8" y="730.2" width="8.0" height="8.3" fill="#000"/><rect x="1312.7" y="730.2" width="8.0" height="8.3" fill="#000"/><rect x="1366.4" y="730.2" width="8.0" height="8.3" fill="#000"/><rect x="1378.1" y="730.2" width="8.0" height="8.3" fill="#000"/><rect x="1390.2" y="730.2" width="8.0" height="8.3" fill="#000"/><rect x="1401.8" y="730.2" width="8.0" height="8.3" fill="#000"/><rect x="1277.7" y="742.3" width="8.0" height="8.3" fill="#000"/><rect x="1289.1" y="742.3" width="8.0" height="8.3" fill="#000"/><rect x="1300.8" y="742.3" width="8.0" height="8.3" fill="#000"/><rect x="1312.7" y="742.3" width="8.0" height="8.3" fill="#000"/><rect x="1366.4" y="742.3" width="8.0" height="8.3" fill="#000"/><rect x="1378.1" y="742.3" width="8.0" height="8.3" fill="#000"/><rect x="1390.2" y="742.3" width="8.0" height="8.3" fill="#000"/><rect x="1401.8" y="742.3" width="8.0" height="8.3" fill="#000"/><rect x="1277.7" y="758.2" width="8.0" height="8.3" fill="#000"/><rect x="1289.1" y="758.2" width="8.0" height="8.3" fill="#000"/><rect x="1300.8" y="758.2" width="8.0" height="8.3" fill="#000"/><rect x="1312.7" y="758.2" width="8.0" height="8.3" fill="#000"/><rect x="1366.4" y="758.2" width="8.0" height="8.3" fill="#000"/><rect x="1378.1" y="758.2" width="8.0" height="8.3" fill="#000"/><rect x="1390.2" y="758.2" width="8.0" height="8.3" fill="#000"/><rect x="1401.8" y="758.2" width="8.0" height="8.3" fill="#000"/><rect x="1277.7" y="770.2" width="8.0" height="8.3" fill="#000"/><rect x="1289.1" y="770.2" width="8.0" height="8.3" fill="#000"/><rect x="1300.8" y="770.2" width="8.0" height="8.3" fill="#000"/><rect x="1312.7" y="770.2" width="8.0" height="8.3" fill="#000"/><rect x="1366.4" y="770.2" width="8.0" height="8.3" fill="#000"/><rect x="1378.1" y="770.2" width="8.0" height="8.3" fill="#000"/><rect x="1390.2" y="770.2" width="8.0" height="8.3" fill="#000"/><rect x="1401.8" y="770.2" width="8.0" height="8.3" fill="#000"/><rect x="1277.7" y="782.3" width="8.0" height="8.3" fill="#000"/><rect x="1289.1" y="782.3" width="8.0" height="8.3" fill="#000"/><rect x="1300.8" y="782.3" width="8.0" height="8.3" fill="#000"/><rect x="1312.7" y="782.3" width="8.0" height="8.3" fill="#000"/><rect x="1366.4" y="782.3" width="8.0" height="8.3" fill="#000"/><rect x="1378.1" y="782.3" width="8.0" height="8.3" fill="#000"/><rect x="1390.2" y="782.3" width="8.0" height="8.3" fill="#000"/><rect x="1401.8" y="782.3" width="8.0" height="8.3" fill="#000"/><rect x="1301.8" y="705.8" width="7.1" height="9.2" fill="#000"/><rect x="1301.8" y="794.2" width="7.1" height="8.8" fill="#000"/><rect x="1313.1" y="705.8" width="7.1" height="9.2" fill="#000"/><rect x="1313.1" y="794.2" width="7.1" height="8.8" fill="#000"/><rect x="1367.2" y="705.8" width="7.1" height="9.2" fill="#000"/><rect x="1367.2" y="794.2" width="7.1" height="8.8" fill="#000"/><rect x="1378.5" y="705.8" width="7.1" height="9.2" fill="#000"/><rect x="1378.5" y="794.2" width="7.1" height="8.8" fill="#000"/><rect x="1296.8" y="721.1" width="4.2" height="2.5" fill="#000"/><rect x="1308.5" y="733.2" width="4.6" height="2.1" fill="#000"/><rect x="1296.8" y="745.2" width="4.2" height="2.1" fill="#000"/><rect x="1296.8" y="761.5" width="4.2" height="2.1" fill="#000"/><rect x="1308.5" y="773.6" width="4.6" height="2.1" fill="#000"/><rect x="1296.8" y="785.2" width="3.3" height="2.1" fill="#000"/><rect x="1304.8" y="714.8" width="2.5" height="3.3" fill="#000"/><rect x="1316.4" y="714.8" width="2.1" height="3.3" fill="#000"/><rect x="1291.8" y="726.5" width="2.5" height="3.8" fill="#000"/><rect x="1315.2" y="738.6" width="2.1" height="3.8" fill="#000"/><rect x="1304.8" y="790.7" width="2.5" height="3.8" fill="#000"/><rect x="1316.4" y="790.7" width="2.1" height="3.8" fill="#000"/><rect x="1291.8" y="778.6" width="2.5" height="3.8" fill="#000"/><rect x="1315.2" y="766.5" width="2.5" height="3.8" fill="#000"/><rect x="1373.9" y="733.2" width="4.6" height="2.1" fill="#000"/><rect x="1373.9" y="773.6" width="4.6" height="2.1" fill="#000"/><rect x="1370.2" y="714.8" width="2.5" height="3.3" fill="#000"/><rect x="1381.8" y="714.8" width="2.1" height="3.3" fill="#000"/><rect x="1370.2" y="790.7" width="2.5" height="3.8" fill="#000"/><rect x="1381.8" y="790.7" width="2.1" height="3.8" fill="#000"/><rect x="1386.0" y="721.1" width="4.2" height="2.5" fill="#000"/><rect x="1398.1" y="745.2" width="4.2" height="2.1" fill="#000"/><rect x="1386.0" y="761.5" width="4.2" height="2.1" fill="#000"/><rect x="1398.1" y="785.2" width="4.2" height="2.1" fill="#000"/><rect x="1393.5" y="726.5" width="2.5" height="3.8" fill="#000"/><rect x="1393.5" y="778.6" width="2.5" height="3.8" fill="#000"/><rect x="1381.8" y="738.6" width="2.1" height="3.8" fill="#000"/><rect x="1381.8" y="766.5" width="2.1" height="3.8" fill="#000"/><polyline points="1321.8,721.3 1325.2,721.3 1337.5,733.0 1337.5,743.3 1328.5,752.5 1311.0,752.5 1308.5,749.8" fill="none" stroke="#000" stroke-width="1.2" stroke-linejoin="round"/><polyline points="1320.2,745.7 1326.8,745.7 1330.3,742.3 1330.3,734.0" fill="none" stroke="#000" stroke-width="1.3" stroke-linejoin="round"/><rect x="1323.9" y="736.1" width="5.4" height="3.8" fill="#000"/><rect x="1332.8" y="734.0" width="2.3" height="7.1" fill="#000"/><polyline points="1364.8,721.7 1357.7,721.7 1348.1,731.9 1345.2,733.2 1345.2,743.3 1355.2,752.9 1376.0,752.9 1377.7,750.7" fill="none" stroke="#000" stroke-width="1.2" stroke-linejoin="round"/><polyline points="1366.4,744.8 1357.7,744.8 1353.7,741.5 1353.7,734.0" fill="none" stroke="#000" stroke-width="1.8" stroke-linejoin="round"/><rect x="1355.3" y="734.0" width="2.3" height="7.1" fill="#000"/><rect x="1340.6" y="733.2" width="2.2" height="14.2" fill="#000"/><circle cx="1341.6" cy="747.8" r="2.5" fill="#000" shape-rendering="geometricPrecision"/><rect x="1337.3" y="734.0" width="1.7" height="8.3" fill="#000"/><rect x="1344.5" y="734.0" width="2.3" height="7.5" fill="#000"/><polyline points="1308.5,758.3 1310.2,756.2 1328.9,756.2 1338.5,766.1 1338.5,775.0 1335.2,778.0 1325.2,787.3 1321.8,787.3" fill="none" stroke="#000" stroke-width="1.2" stroke-linejoin="round"/><polyline points="1320.2,762.3 1326.0,762.3 1330.6,766.5 1330.6,774.8" fill="none" stroke="#000" stroke-width="1.3" stroke-linejoin="round"/><circle cx="1325.2" cy="770.8" r="2.2" fill="#000" shape-rendering="geometricPrecision"/><rect x="1333.1" y="768.2" width="2.2" height="7.5" fill="#000"/><polyline points="1377.7,757.5 1376.4,755.4 1354.3,755.4 1344.5,765.7 1344.5,774.8 1348.1,776.7 1358.5,787.3 1364.8,788.2" fill="none" stroke="#000" stroke-width="1.2" stroke-linejoin="round"/><polyline points="1366.4,762.3 1356.8,762.3 1352.8,766.5 1352.8,774.8" fill="none" stroke="#000" stroke-width="1.7" stroke-linejoin="round"/><rect x="1355.3" y="768.2" width="2.3" height="6.8" fill="#000"/><rect x="1340.6" y="768.2" width="2.2" height="11.2" fill="#000"/><rect x="1336.8" y="768.2" width="2.0" height="6.7" fill="#000"/><rect x="1344.5" y="768.2" width="2.3" height="6.7" fill="#000"/><rect x="1336.8" y="779.0" width="9.3" height="8.3" fill="#000"/><rect x="1346.0" y="781.5" width="6.0" height="5.0" fill="#000"/><rect x="1336.0" y="789.8" width="11.2" height="10.0" fill="none" stroke="#fff" stroke-width="1.0" stroke-dasharray="3 2"/><circle cx="1412.1" cy="722.3" r="2.4" fill="none" stroke="#fff" stroke-width="1.1" shape-rendering="geometricPrecision"/><circle cx="1412.7" cy="786.8" r="2.4" fill="none" stroke="#fff" stroke-width="1.1" shape-rendering="geometricPrecision"/><polyline points="1407.1,754.0 1413.8,754.0 1414.3,749.6 1416.0,746.8 1419.3,746.8 1421.0,750.1 1421.6,752.9" fill="none" stroke="#fff" stroke-width="1.0" stroke-linejoin="round"/><polyline points="1407.1,757.3 1413.8,757.3 1413.8,760.7" fill="none" stroke="#fff" stroke-width="1.0" stroke-linejoin="round"/><rect x="1423.2" y="750.1" width="10.6" height="11.7" fill="none" stroke="#fff" stroke-width="1.0" stroke-dasharray="3 2"/><rect x="1421.6" y="751.8" width="2.8" height="8.9" fill="#fff"/><rect x="1336.0" y="779.6" width="14.4" height="10.0" fill="#fff"/><rect x="1336.0" y="779.6" width="6.7" height="6.1" fill="#000"/><rect x="1343.8" y="781.8" width="5.6" height="5.6" fill="#000"/><rect x="1336.0" y="789.6" width="11.1" height="10.0" fill="none" stroke="#fff" stroke-width="1.0" stroke-dasharray="3 2"/><rect x="1336.0" y="780.7" width="1.1" height="1.1" fill="#000"/></g><rect x="1190" y="667" width="13" height="12.5" fill="#fff"/><rect x="1469.5" y="665" width="14" height="14.5" fill="#fff"/><rect x="1330.5" y="807.5" width="11.5" height="12" fill="#fff"/></svg>
<div class="cb" style="left:1204px;top:952.300px"></div>
<div class="cb" style="left:1444.500px;top:952.300px"></div>

<!-- Output group -->
<div class="grp" style="left:540px;top:1038px;width:1045px;height:141.500px"></div>
<div class="inp" style="left:774px;top:1050px;width:630px;height:48px"></div>
<div class="btn" style="left:1416px;top:1048px;width:148.500px;height:52px"></div>
<div class="inp" style="left:770px;top:1112px;width:794.500px;height:48px"></div>
<svg style="left:560px;top:1202px" width="20" height="32" viewBox="0 0 20 32"><path d="M2 2.500l14 13-14 13z" fill="#333"/></svg>

<!-- bottom right -->
<div class="btn" style="left:1478px;top:1328px;width:106px;height:52px"></div>
<div style="left:1268px;top:1300px;width:224px;height:108px;border:14px solid #fb4540;background:#efefef"></div>
<div class="btn" style="left:1302px;top:1326px;width:164px;height:56px;border:3px solid #0696d7;border-radius:8px"></div>



<!-- text labels -->
<div class="t" style="left:51.38px;top:15.98px;font-size:24px;line-height:30px;letter-spacing:-0.539px;color:#ffffff">CAM Processor</div>
<div class="t" style="left:41.34px;top:88.64px;font-size:25px;line-height:31px;letter-spacing:-0.643px;color:#828282">pcbway_4layer.cam</div>
<div class="t" style="left:599.34px;top:87.14px;font-size:25px;line-height:31px;letter-spacing:-0.602px;color:#303030">Export as ZIP</div>
<div class="t" style="left:819.34px;top:87.14px;font-size:25px;line-height:31px;letter-spacing:-0.394px;color:#828282">Export to Project Directory</div>
<div class="t" style="left:1361.34px;top:87.14px;font-size:25px;line-height:31px;letter-spacing:-0.297px;color:#303030">Units:</div>
<div class="t" style="left:1445.34px;top:87.14px;font-size:25px;line-height:31px;letter-spacing:-0.490px;color:#303030">Metric</div>
<div class="t" style="left:551.34px;top:160.14px;font-size:25px;line-height:31px;letter-spacing:-0.720px;color:#303030">Gerber File</div>
<div class="t" style="left:567.34px;top:220.14px;font-size:25px;line-height:31px;letter-spacing:-0.703px;color:#303030">Name:</div>
<div class="t" style="left:678.34px;top:220.14px;font-size:25px;line-height:31px;letter-spacing:-0.312px;color:#303030">Top Copper</div>
<div class="t" style="left:1047.34px;top:220.14px;font-size:25px;line-height:31px;letter-spacing:-0.413px;color:#303030">Function:</div>
<div class="t" style="left:1200.34px;top:220.14px;font-size:25px;line-height:31px;letter-spacing:-0.896px;color:#828282">Copper</div>
<div class="t" style="left:567.34px;top:283.64px;font-size:25px;line-height:31px;letter-spacing:-0.415px;color:#303030">Layer type:</div>
<div class="t" style="left:708.84px;top:283.64px;font-size:25px;line-height:31px;letter-spacing:0.604px;color:#303030">Top</div>
<div class="t" style="left:847.84px;top:283.64px;font-size:25px;line-height:31px;letter-spacing:-0.524px;color:#303030">Gerber layer number:</div>
<div class="t" style="left:1097.84px;top:283.64px;font-size:25px;line-height:31px;letter-spacing:-1.594px;color:#303030">L1</div>
<div class="t" style="left:1279.34px;top:283.14px;font-size:25px;line-height:31px;letter-spacing:-0.578px;color:#303030">Negative image</div>
<div class="t" style="left:551.34px;top:346.14px;font-size:25px;line-height:31px;letter-spacing:-0.987px;color:#303030">Layers</div>
<div class="t" style="left:609.34px;top:411.14px;font-size:25px;line-height:31px;letter-spacing:2.719px;color:#303030">#</div>
<div class="t" style="left:681.34px;top:411.14px;font-size:25px;line-height:31px;letter-spacing:-0.684px;color:#303030">Layer</div>
<div class="t" style="left:606.34px;top:450.14px;font-size:25px;line-height:31px;letter-spacing:-2.281px;color:#828282">1</div>
<div class="t" style="left:678.34px;top:450.14px;font-size:25px;line-height:31px;letter-spacing:0.771px;color:#828282">Top</div>
<div class="t" style="left:605.84px;top:484.14px;font-size:25px;line-height:31px;letter-spacing:-1.094px;color:#828282">17</div>
<div class="t" style="left:679.34px;top:484.14px;font-size:25px;line-height:31px;letter-spacing:-1.465px;color:#828282">Pads</div>
<div class="t" style="left:605.84px;top:518.14px;font-size:25px;line-height:31px;letter-spacing:-1.094px;color:#828282">18</div>
<div class="t" style="left:678.34px;top:518.14px;font-size:25px;line-height:31px;letter-spacing:-0.516px;color:#828282">Vias</div>
<div class="t" style="left:1243.09px;top:953.14px;font-size:25px;line-height:31px;letter-spacing:-0.916px;color:#303030">Board Shape</div>
<div class="t" style="left:1483.34px;top:953.14px;font-size:25px;line-height:31px;letter-spacing:-0.507px;color:#303030">Cutouts</div>
<div class="t" style="left:551.34px;top:1001.14px;font-size:25px;line-height:31px;letter-spacing:0.010px;color:#303030">Output</div>
<div class="t" style="left:581.34px;top:1059.89px;font-size:25px;line-height:31px;letter-spacing:-0.521px;color:#303030">Gerber filename:</div>
<div class="t" style="left:795.84px;top:1059.89px;font-size:25px;line-height:31px;letter-spacing:-0.696px;color:#303030">%PREFIX/copper_top_l1.gbr</div>
<div class="t" style="left:1433.34px;top:1060.14px;font-size:25px;line-height:31px;letter-spacing:-0.533px;color:#303030">Export File</div>
<div class="t" style="left:558.84px;top:1121.64px;font-size:25px;line-height:31px;letter-spacing:-0.477px;color:#303030">Resolved file path:</div>
<div class="t" style="left:791.34px;top:1121.64px;font-size:25px;line-height:31px;letter-spacing:-0.675px;color:#828282">CAMOutputs/GerberFiles/copper_top_l1.gbr</div>
<div class="t" style="left:595.09px;top:1204.89px;font-size:25px;line-height:31px;letter-spacing:-0.979px;color:#303030">Advanced</div>
<div class="t" style="left:28.34px;top:169.14px;font-size:25px;line-height:31px;letter-spacing:-0.430px;color:#303030">Output Files</div>
<div class="t" style="left:67.09px;top:208.14px;font-size:25px;line-height:31px;letter-spacing:-0.906px;color:#303030">Gerber</div>
<div class="t" style="left:106.34px;top:242.14px;font-size:25px;line-height:31px;letter-spacing:-0.412px;color:#ffffff">Top Copper</div>
<div class="t" style="left:106.84px;top:276.14px;font-size:25px;line-height:31px;letter-spacing:-1.152px;color:#303030">EAGLE Copper Layer 2</div>
<div class="t" style="left:106.84px;top:310.14px;font-size:25px;line-height:31px;letter-spacing:-1.140px;color:#303030">EAGLE Copper Layer 15</div>
<div class="t" style="left:106.84px;top:344.14px;font-size:25px;line-height:31px;letter-spacing:-0.540px;color:#303030">Bottom Copper</div>
<div class="t" style="left:106.84px;top:378.14px;font-size:25px;line-height:31px;letter-spacing:-0.464px;color:#303030">Profile</div>
<div class="t" style="left:106.84px;top:412.14px;font-size:25px;line-height:31px;letter-spacing:-0.548px;color:#303030">Soldermask Top</div>
<div class="t" style="left:106.84px;top:446.14px;font-size:25px;line-height:31px;letter-spacing:-0.677px;color:#303030">Soldermask Bottom</div>
<div class="t" style="left:106.84px;top:480.14px;font-size:25px;line-height:31px;letter-spacing:-0.507px;color:#303030">Solderpaste Top</div>
<div class="t" style="left:106.84px;top:514.14px;font-size:25px;line-height:31px;letter-spacing:-0.609px;color:#303030">Solderpaste Bottom</div>
<div class="t" style="left:106.84px;top:548.14px;font-size:25px;line-height:31px;letter-spacing:-0.536px;color:#303030">Silkscreen Top</div>
<div class="t" style="left:106.84px;top:582.14px;font-size:25px;line-height:31px;letter-spacing:-0.638px;color:#303030">Silkscreen Bottom</div>
<div class="t" style="left:67.09px;top:616.14px;font-size:25px;line-height:31px;letter-spacing:-0.134px;color:#303030">Drill</div>
<div class="t" style="left:106.84px;top:650.14px;font-size:25px;line-height:31px;letter-spacing:-0.859px;color:#303030">Excellon</div>
<div class="t" style="left:66.84px;top:684.14px;font-size:25px;line-height:31px;letter-spacing:-0.969px;color:#303030">Assembly</div>
<div class="t" style="left:67.09px;top:718.14px;font-size:25px;line-height:31px;letter-spacing:-0.604px;color:#303030">Drawings</div>
<div class="t" style="left:67.34px;top:752.14px;font-size:25px;line-height:31px;letter-spacing:-1.083px;color:#303030">Legacy</div>
<div class="t" style="left:51.25px;top:1001.24px;font-size:27px;line-height:34px;letter-spacing:0.514px;color:#303030">+</div>
<div class="t" style="left:133.80px;top:999.59px;font-size:26px;line-height:32px;letter-spacing:1.038px;color:#303030">-</div>
<div class="t" style="left:28.84px;top:1071.89px;font-size:25px;line-height:31px;letter-spacing:-0.817px;color:#303030">EAGLE default 4 layer CAM job.</div>
<div class="t" style="left:37.34px;top:1274.14px;font-size:25px;line-height:31px;letter-spacing:-0.410px;color:#303030">Edit Description...</div>
<div class="t" style="left:36.34px;top:1339.14px;font-size:25px;line-height:31px;letter-spacing:-0.591px;color:#303030">Select Board...</div>
<div class="t" style="left:12.84px;top:1404.14px;font-size:25px;line-height:31px;letter-spacing:-0.296px;color:#303030">C:/Users/frank/Documents/GIT/ahoi_hardware/boards/rx/rx.brd</div>
<div class="t" style="left:1209.90px;top:1317.59px;font-size:54px;line-height:68px;letter-spacing:1.243px;color:#fb4540">2</div>
<div class="t" style="left:1321.14px;top:1339.94px;font-size:25px;line-height:31px;letter-spacing:-1.203px;color:#303030">Process Job</div>
<div class="t" style="left:1494.74px;top:1339.94px;font-size:25px;line-height:31px;letter-spacing:-1.267px;color:#303030">Cancel</div>
</div>
</body></html>
